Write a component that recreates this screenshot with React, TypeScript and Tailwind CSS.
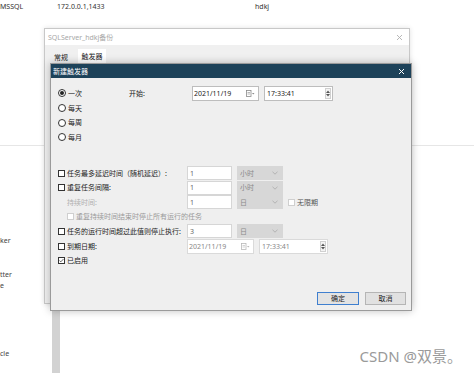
import type * as React from 'react'

const LABEL_W = 'w-[129px]'

function Chevron(): React.JSX.Element {
  return (
    <svg width="6" height="4" viewBox="0 0 6 4" className="shrink-0">
      <polyline points="0.5,0.8 3,3.2 5.5,0.8" fill="none" stroke="#a8a8a8" strokeWidth="0.8" />
    </svg>
  )
}

function CalendarIcon({ dim }: { dim?: boolean }): React.JSX.Element {
  const c = dim ? '#b8b8b8' : '#8a8a8a'
  return (
    <svg width="9" height="7" viewBox="0 0 9 7" className="shrink-0">
      <rect x="0.5" y="0.5" width="4.5" height="6" fill="#fff" stroke={c} strokeWidth="0.8" />
      <line x1="1.5" y1="2.5" x2="4" y2="2.5" stroke={c} strokeWidth="0.6" />
      <line x1="1.5" y1="4" x2="4" y2="4" stroke={c} strokeWidth="0.6" />
      <polygon points="6,3 8.5,3 7.25,4.6" fill={c} />
    </svg>
  )
}

function Spinner(): React.JSX.Element {
  return (
    <div className="flex h-[11px] w-[6px] flex-col items-center justify-center gap-[1px] border border-[#d0d0d0] bg-[#f4f4f4]">
      <svg width="4" height="3" viewBox="0 0 4 3">
        <polygon points="0,3 4,3 2,0.5" fill="#555" />
      </svg>
      <svg width="4" height="3" viewBox="0 0 4 3">
        <polygon points="0,0 4,0 2,2.5" fill="#555" />
      </svg>
    </div>
  )
}

function Box({ checked, dim }: { checked?: boolean; dim?: boolean }): React.JSX.Element {
  return (
    <span
      className={`flex h-[7px] w-[7px] shrink-0 items-center justify-center border bg-white ${
        dim ? 'border-[#cfcfcf]' : 'border-[#333]'
      }`}
    >
      {checked ? (
        <svg width="6" height="5" viewBox="0 0 6 5">
          <polyline points="0.6,2.6 2.2,4.1 5.4,0.7" fill="none" stroke="#333" strokeWidth="0.9" />
        </svg>
      ) : null}
    </span>
  )
}

function Radio({ label, checked }: { label: string; checked?: boolean }): React.JSX.Element {
  return (
    <div className="flex h-[14.7px] items-center gap-[2px]">
      <span className="flex h-[8px] w-[8px] items-center justify-center rounded-full border border-[#333] bg-white">
        {checked ? <span className="h-[4px] w-[4px] rounded-full bg-[#222]" /> : null}
      </span>
      <span>{label}</span>
    </div>
  )
}

function NumInput({ value }: { value: string }): React.JSX.Element {
  return (
    <div className="flex h-[14px] w-[45px] items-center border border-[#d6d6d6] bg-white pl-[2px] text-[#666]">
      {value}
    </div>
  )
}

function UnitSelect({ value }: { value: string }): React.JSX.Element {
  return (
    <div className="ml-[5px] flex h-[14px] w-[46px] items-center justify-between bg-[#d7d7d7] pl-[3px] pr-[5px] text-[#8a8a8a]">
      <span>{value}</span>
      <Chevron />
    </div>
  )
}

function DateBox({ dim }: { dim?: boolean }): React.JSX.Element {
  return (
    <div
      className={`flex h-[15px] w-[67px] items-center justify-between border bg-white pl-[1px] pr-[3px] ${
        dim ? 'border-[#dadada] text-[#888]' : 'border-[#bdbdbd] text-[#222]'
      }`}
    >
      <span>2021/11/19</span>
      <CalendarIcon dim={dim} />
    </div>
  )
}

function TimeBox({ dim }: { dim?: boolean }): React.JSX.Element {
  return (
    <div
      className={`ml-[5px] flex h-[15px] w-[69px] items-center justify-between border bg-white pl-[2px] pr-[1px] ${
        dim ? 'border-[#dadada] text-[#888]' : 'border-[#bdbdbd] text-[#222]'
      }`}
    >
      <span>17:33:41</span>
      <Spinner />
    </div>
  )
}

function TriggerDialog(): React.JSX.Element {
  return (
    <div className="absolute left-[50px] top-[63px] flex h-[248px] w-[362px] flex-col border border-[#9a9a9a] bg-[#efefef] shadow-[0_0_8px_rgba(0,0,0,0.25)]">
      <div className="flex h-[14px] shrink-0 items-center justify-between bg-[#1d4259] pl-[2px] pr-[6px] text-white">
        <span>新建触发器</span>
        <svg width="7" height="7" viewBox="0 0 7 7">
          <path d="M1 1 L6 6 M6 1 L1 6" stroke="#fff" strokeWidth="1" />
        </svg>
      </div>

      <div className="flex flex-1 flex-col pl-[7px] pr-[5px] pt-[8px] text-[#222]">
        <div className="flex items-start">
          <div className="flex w-[71px] flex-col">
            <Radio label="一次" checked />
            <Radio label="每天" />
            <Radio label="每周" />
            <Radio label="每月" />
          </div>
          <div className="flex h-[15px] w-[63px] items-center">开始:</div>
          <DateBox />
          <TimeBox />
        </div>

        <div className="mt-[21px] flex flex-col">
          <div className="flex h-[14.6px] items-center">
            <div className={`${LABEL_W} flex items-center gap-[2px]`}>
              <Box />
              <span>任务最多延迟时间（随机延迟）:</span>
            </div>
            <NumInput value="1" />
            <UnitSelect value="小时" />
          </div>
          <div className="flex h-[14.6px] items-center">
            <div className={`${LABEL_W} flex items-center gap-[2px]`}>
              <Box />
              <span>重复任务间隔:</span>
            </div>
            <NumInput value="1" />
            <UnitSelect value="小时" />
          </div>
          <div className="flex h-[14.6px] items-center">
            <div className={`${LABEL_W} pl-[9px] text-[#b0b0b0]`}>持续时间:</div>
            <NumInput value="1" />
            <UnitSelect value="日" />
            <div className="ml-[5px] flex items-center gap-[2px] text-[#555]">
              <Box dim />
              <span>无限期</span>
            </div>
          </div>
          <div className="flex h-[14.6px] items-center gap-[2px] pl-[9px] text-[#9a9a9a]">
            <Box dim />
            <span>重复持续时间结束时停止所有运行的任务</span>
          </div>
          <div className="flex h-[14.6px] items-center">
            <div className={`${LABEL_W} flex items-center gap-[2px]`}>
              <Box />
              <span>任务的运行时间超过此值则停止执行:</span>
            </div>
            <NumInput value="3" />
            <UnitSelect value="日" />
          </div>
          <div className="flex h-[14.6px] items-center">
            <div className={`${LABEL_W} flex items-center gap-[2px]`}>
              <Box />
              <span>到期日期:</span>
            </div>
            <DateBox dim />
            <TimeBox dim />
          </div>
          <div className="flex h-[14.6px] items-center gap-[2px]">
            <Box checked />
            <span>已启用</span>
          </div>
        </div>

        <div className="mb-[5px] mt-auto flex justify-end gap-[6px]">
          <button
            type="button"
            className="flex h-[13px] w-[42px] items-center justify-center border-[1.5px] border-[#3f7fcf] bg-[#e3e3e3] text-[#222]"
          >
            确定
          </button>
          <button
            type="button"
            className="flex h-[13px] w-[41px] items-center justify-center border border-[#b5b5b5] bg-[#e1e1e1] text-[#222]"
          >
            取消
          </button>
        </div>
      </div>
    </div>
  )
}

function BackupDialog(): React.JSX.Element {
  return (
    <div className="absolute left-[44px] top-[28px] flex h-[276px] w-[366px] flex-col border border-[#c8c8c8] bg-[#f0f0f0] shadow-[0_0_5px_rgba(0,0,0,0.12)]">
      <div className="flex h-[16px] items-center justify-between bg-white pl-[3px] pr-[6px] text-[#a8a8a8]">
        <span>SQLServer_hdkj备份</span>
        <svg width="7" height="7" viewBox="0 0 7 7">
          <path d="M1 1 L6 6 M6 1 L1 6" stroke="#b0b0b0" strokeWidth="0.9" />
        </svg>
      </div>
      <div className="flex items-end pl-[7px] pt-[4px] text-[#222]">
        <span className="flex h-[14px] w-[26px] items-center pl-[2px]">常规</span>
        <span className="flex h-[15px] w-[28px] items-center justify-center bg-white">触发器</span>
      </div>
    </div>
  )
}

export default function App(): React.JSX.Element {
  return (
    <div className="relative h-[373px] w-[474px] overflow-hidden bg-white font-['Noto_Sans','Noto_Sans_CJK_SC',sans-serif] text-[7px] leading-none">
      <div className="flex h-[12px] items-center text-[#333]">
        <span className="w-[57px]">MSSQL</span>
        <span className="w-[198px]">172.0.0.1,1433</span>
        <span>hdkj</span>
      </div>

      <div className="mt-[133px] h-px bg-[#e6e6e6]" />

      <div className="flex flex-col text-[#444]">
        <span className="mt-[91px]">ker</span>
        <span className="mt-[27px]">tter</span>
        <span className="mt-[4px]">e</span>
        <span className="mt-[61px]">cle</span>
      </div>

      <div className="absolute bottom-0 left-[52px] top-[305px] w-[8px] bg-[#d2d2d2]" />

      <BackupDialog />
      <TriggerDialog />

      <div className="absolute bottom-[9px] right-[12px] text-[15px] text-[#9a9a9a]">CSDN @双景。</div>
    </div>
  )
}
